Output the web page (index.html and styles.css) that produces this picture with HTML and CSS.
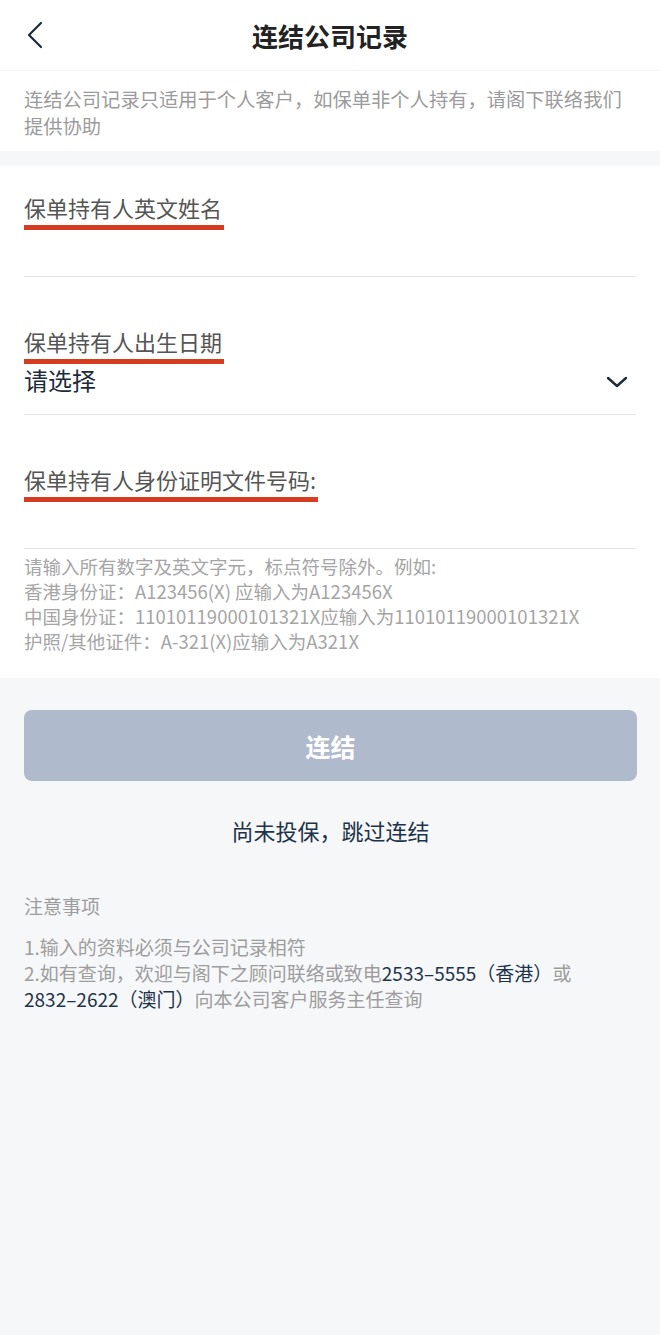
FILE: index.html
```html
<!DOCTYPE html>
<html lang="zh-CN">
<head>
<meta charset="utf-8">
<title>连结公司记录</title>
<link rel="stylesheet" href="styles.css">
</head>
<body>
<div class="page">
  <header class="topbar">
    <button class="back" aria-label="返回">
      <svg width="20" height="28" viewBox="0 0 20 28"><path d="M16 2 L4 14 L16 26" fill="none" stroke="#1c2b3a" stroke-width="2.2" stroke-linecap="round" stroke-linejoin="round"/></svg>
    </button>
    <h1 class="title">连结公司记录</h1>
  </header>

  <section class="intro">连结公司记录只适用于个人客户，如保单非个人持有，请阁下联络我们提供协助</section>

  <section class="form">
    <div class="field">
      <div class="label"><span class="mark">保单持有人英文姓名</span></div>
      <div class="input"></div>
    </div>
    <div class="field field-select">
      <div class="label"><span class="mark">保单持有人出生日期</span></div>
      <div class="select">
        <span class="select-value">请选择</span>
        <svg class="chev" width="22" height="12" viewBox="0 0 22 12"><path d="M2 2 L11 10 L20 2" fill="none" stroke="#1c2b3a" stroke-width="2.4" stroke-linecap="round" stroke-linejoin="round"/></svg>
      </div>
    </div>
    <div class="field">
      <div class="label"><span class="mark">保单持有人身份证明文件号码:</span></div>
      <div class="input"></div>
    </div>
    <div class="hint">
      <p>请输入所有数字及英文字元，标点符号除外。例如:</p>
      <p>香港身份证：A123456(X) 应输入为A123456X</p>
      <p>中国身份证：11010119000101321X应输入为11010119000101321X</p>
      <p>护照/其他证件：A-321(X)应输入为A321X</p>
    </div>
  </section>

  <section class="actions">
    <button class="btn-primary">连结</button>
    <a class="skip">尚未投保，跳过连结</a>
  </section>

  <section class="notes">
    <h2 class="notes-title">注意事项</h2>
    <p>1.输入的资料必须与公司记录相符</p>
    <p>2.如有查询，欢迎与阁下之顾问联络或致电<span class="strong">2533–5555（香港）</span>或<br><span class="strong">2832–2622（澳门）</span>向本公司客户服务主任查询</p>
  </section>
</div>
</body>
</html>
```

FILE: styles.css
```css
* { box-sizing: border-box; margin: 0; padding: 0; }

html, body {
  background: #f6f7f9;
}

body {
  font-family: "Noto Sans CJK SC", "Noto Sans", sans-serif;
  color: #222;
}

.page {
  width: 660px;
  min-height: 1335px;
  background: #f6f7f9;
}

.topbar {
  height: 71px;
  background: #fff;
  border-bottom: 1px solid #f0f1f3;
  display: flex;
  align-items: center;
  justify-content: center;
  position: relative;
}

.back {
  position: absolute;
  left: 25px;
  top: 21px;
  border: 0;
  background: none;
  display: flex;
}

.title {
  font-size: 26px;
  font-weight: 700;
  color: #222;
  line-height: 36px;
  margin-top: 2px;
}

.intro {
  background: #fff;
  padding: 15px 30px 11px 24px;
  font-size: 19.3px;
  line-height: 27px;
  color: #9b9b9b;
}

.form {
  background: #fff;
  margin-top: 15px;
  padding: 0 24px 24px;
}

.field {
  padding-top: 49px;
  border-bottom: 1px solid #e2e3e5;
}

.field:first-child {
  padding-top: 26px;
}

.label {
  font-size: 22px;
  line-height: 30px;
  color: #555;
}

.mark {
  display: inline-block;
  padding-bottom: 3px;
  border-bottom: 5px solid #d53c20;
  padding-right: 2px;
}

.input {
  height: 46px;
}

.select {
  display: flex;
  align-items: center;
  justify-content: space-between;
  height: 31px;
  margin-bottom: 19px;
}

.select-value {
  font-size: 24px;
  line-height: 30px;
  color: #1c2b3a;
}

.chev {
  margin-right: 8px;
  margin-top: 4px;
}

.hint {
  padding-top: 5px;
  font-size: 18.5px;
  line-height: 25px;
  color: #a5a5a5;
}

.actions {
  padding: 32px 23px 0 24px;
  display: flex;
  flex-direction: column;
  align-items: center;
}

.btn-primary {
  width: 100%;
  height: 71px;
  border: 0;
  border-radius: 8px;
  background: #afbbcc;
  color: #fff;
  font-family: inherit;
  font-size: 25px;
  font-weight: 700;
  letter-spacing: 0;
}

.skip {
  margin-top: 34px;
  font-size: 22px;
  line-height: 30px;
  color: #1d3349;
}

.notes {
  padding: 48px 24px 0;
  font-size: 19px;
  line-height: 26px;
  color: #9d9d9d;
}

.notes-title {
  font-size: 19px;
  font-weight: 400;
  line-height: 25px;
  margin-bottom: 16px;
}

.strong {
  color: #1d3349;
}
```
